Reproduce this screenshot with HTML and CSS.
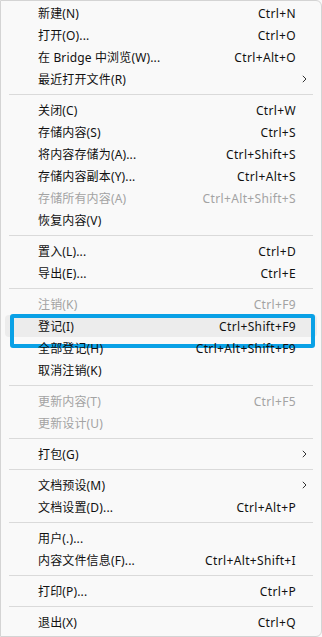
FILE: index.html
```html
<!DOCTYPE html>
<html lang="zh-CN">

<head>
    <meta charset="UTF-8">
    <meta name="viewport" content="width=device-width, initial-scale=1.0">
    <title>文件菜单</title>
    <link rel="stylesheet" href="styles.css">
</head>

<body>
    <div class="menu">
        <div class="item"><span>新建(N)</span><span class="key">Ctrl+N</span></div>
        <div class="item"><span>打开(O)...</span><span class="key">Ctrl+O</span></div>
        <div class="item"><span>在 Bridge 中浏览(W)...</span><span class="key">Ctrl+Alt+O</span></div>
        <div class="item"><span>最近打开文件(R)</span><span class="sub"><svg width="5" height="8" viewBox="0 0 5 8"><path d="M0.8 0.8 L4 4 L0.8 7.2" fill="none" stroke="#333" stroke-width="1"/></svg></span></div>
        <div class="sep"></div>

        <div class="item"><span>关闭(C)</span><span class="key">Ctrl+W</span></div>
        <div class="item"><span>存储内容(S)</span><span class="key">Ctrl+S</span></div>
        <div class="item"><span>将内容存储为(A)...</span><span class="key">Ctrl+Shift+S</span></div>
        <div class="item"><span>存储内容副本(Y)...</span><span class="key">Ctrl+Alt+S</span></div>
        <div class="item off"><span>存储所有内容(A)</span><span class="key">Ctrl+Alt+Shift+S</span></div>
        <div class="item"><span>恢复内容(V)</span></div>
        <div class="sep"></div>

        <div class="item"><span>置入(L)...</span><span class="key">Ctrl+D</span></div>
        <div class="item"><span>导出(E)...</span><span class="key">Ctrl+E</span></div>
        <div class="sep"></div>

        <div class="item off"><span>注销(K)</span><span class="key">Ctrl+F9</span></div>
        <div class="item hot"><span>登记(I)</span><span class="key">Ctrl+Shift+F9</span></div>
        <div class="item"><span>全部登记(H)</span><span class="key">Ctrl+Alt+Shift+F9</span></div>
        <div class="item"><span>取消注销(K)</span></div>
        <div class="sep"></div>

        <div class="item off"><span>更新内容(T)</span><span class="key">Ctrl+F5</span></div>
        <div class="item off"><span>更新设计(U)</span></div>
        <div class="sep"></div>

        <div class="item"><span>打包(G)</span><span class="sub"><svg width="5" height="8" viewBox="0 0 5 8"><path d="M0.8 0.8 L4 4 L0.8 7.2" fill="none" stroke="#333" stroke-width="1"/></svg></span></div>
        <div class="sep"></div>

        <div class="item"><span>文档预设(M)</span><span class="sub"><svg width="5" height="8" viewBox="0 0 5 8"><path d="M0.8 0.8 L4 4 L0.8 7.2" fill="none" stroke="#333" stroke-width="1"/></svg></span></div>
        <div class="item"><span>文档设置(D)...</span><span class="key">Ctrl+Alt+P</span></div>
        <div class="sep"></div>

        <div class="item"><span>用户(.)...</span></div>
        <div class="item"><span>内容文件信息(F)...</span><span class="key">Ctrl+Alt+Shift+I</span></div>
        <div class="sep"></div>

        <div class="item"><span>打印(P)...</span><span class="key">Ctrl+P</span></div>
        <div class="sep"></div>

        <div class="item"><span>退出(X)</span><span class="key">Ctrl+Q</span></div>
    </div>
</body>

</html>
```

FILE: styles.css
```css
* {
    box-sizing: border-box;
    margin: 0;
    padding: 0;
}

body {
    width: 322px;
    height: 637px;
    background: #f9f9f9;
    font-family: "Noto Sans", "Noto Sans CJK SC", sans-serif;
    font-size: 12px;
    color: #111;
}

.menu {
    width: 322px;
    height: 637px;
    background: #f9f9f9;
    border: 1px solid #d4d4d4;
    border-radius: 0 6px 6px 0;
    padding-top: 1px;
}

.item {
    position: relative;
    display: flex;
    align-items: center;
    justify-content: space-between;
    height: 22px;
    margin: 0 4px 0 4px;
    padding: 0 21px 0 33px;
    border-radius: 4px;
    white-space: nowrap;
    letter-spacing: 0.15px;
}

.key {
    letter-spacing: 0.35px;
}

.item.off {
    color: #a3a3a3;
}

.item.hot {
    background: #ececec;
}

/* blue annotation frame */
.item.hot::after {
    content: "";
    position: absolute;
    left: 5px;
    top: -1px;
    width: 297px;
    height: 26px;
    border: 4px solid #0aa1e6;
    border-radius: 3px;
}

.sub {
    display: flex;
    margin-right: -11px;
}

.sep {
    height: 1px;
    margin: 4px 8px 4px 8px;
    background: #dadada;
}
```
